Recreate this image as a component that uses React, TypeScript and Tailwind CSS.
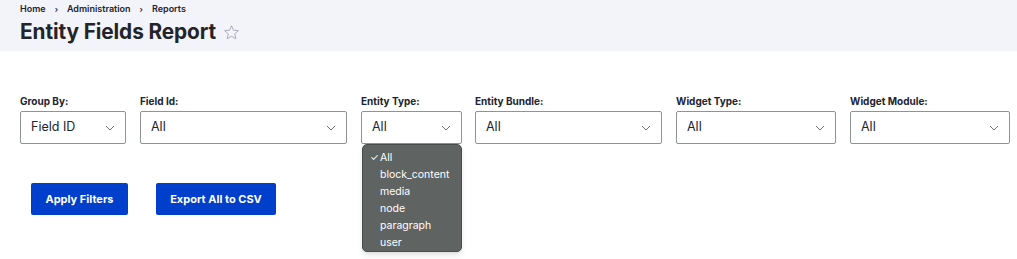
import React from 'react';

const font = { fontFamily: 'Inter, "Liberation Sans", Arial, sans-serif' };

function Chevron() {
  return (
    <svg width="10" height="6" viewBox="0 0 10 6" fill="none" className="shrink-0">
      <path d="M1 1l4 4 4-4" stroke="#6b6e76" strokeWidth="1" />
    </svg>
  );
}

function Star() {
  return (
    <svg width="17" height="17" viewBox="0 0 24 24" fill="none" className="ml-[7px] mt-[2px]">
      <path
        d="M12 2.5l2.8 6.3 6.9.6-5.2 4.6 1.6 6.8L12 17.3l-6.1 3.5 1.6-6.8-5.2-4.6 6.9-.6z"
        stroke="#8e929c"
        strokeWidth="1"
        strokeLinejoin="round"
      />
    </svg>
  );
}

interface FilterProps {
  label: string;
  value: string;
  width: string;
  children?: React.ReactNode;
}

function Filter({ label, value, width, children }: FilterProps) {
  return (
    <div className={`relative flex flex-col ${width}`}>
      <label className="text-[10px] font-bold text-[#222330] leading-[12px] mb-[4px]">{label}</label>
      <div className="h-[33px] border border-[#8e929c] rounded-[2px] bg-white flex items-center justify-between pl-[10px] pr-[10px]">
        <span className="text-[12.5px] text-[#222330]">{value}</span>
        <Chevron />
      </div>
      {children}
    </div>
  );
}

export default function App() {
  const options = ['block_content', 'media', 'node', 'paragraph', 'user'];
  return (
    <div className="w-[1017px] h-[259px] bg-white overflow-hidden" style={font}>
      {/* Header */}
      <div className="h-[51px] bg-[#f3f4f9] px-[20px] pt-[3px]">
        <div className="flex items-center gap-[9px] text-[9px] font-semibold text-[#222330] leading-[12px]">
          <span>Home</span>
          <span className="text-[8px]">›</span>
          <span>Administration</span>
          <span className="text-[8px]">›</span>
          <span>Reports</span>
        </div>
        <div className="flex items-center mt-[3px]">
          <h1 className="text-[20.8px] font-bold text-[#232429] leading-[27px] tracking-[-0.1px]">Entity Fields Report</h1>
          <Star />
        </div>
      </div>

      {/* Filters */}
      <div className="flex gap-[14px] pl-[20px] mt-[44px]">
        <Filter label="Group By:" value="Field ID" width="w-[106px]" />
        <Filter label="Field Id:" value="All" width="w-[207px]" />
        <Filter label="Entity Type:" value="All" width="w-[101px]">
          <div className="absolute top-[49px] left-[1px] w-[100px] h-[108px] bg-[#5f6362] rounded-[5px] border border-[#4a4d4c] shadow-md pt-[4px] z-10">
            <div className="flex items-center h-[17px] pl-[7px] text-[10.5px] text-white">
              <span className="w-[10px] text-[10px]">✓</span>
              <span>All</span>
            </div>
            {options.map((o) => (
              <div key={o} className="flex items-center h-[17px] pl-[17px] text-[10.5px] text-white">
                {o}
              </div>
            ))}
          </div>
        </Filter>
        <div className="ml-[-1px]">
          <Filter label="Entity Bundle:" value="All" width="w-[187px]" />
        </div>
        <Filter label="Widget Type:" value="All" width="w-[160px]" />
        <Filter label="Widget Module:" value="All" width="w-[160px]" />
      </div>

      {/* Buttons */}
      <div className="flex gap-[28px] pl-[31px] mt-[39px]">
        <button className="h-[32px] w-[97px] bg-[#003ecc] rounded-[2px] text-white text-[11px] font-bold">Apply Filters</button>
        <button className="h-[32px] w-[120px] bg-[#003ecc] rounded-[2px] text-white text-[11px] font-bold">Export All to CSV</button>
      </div>
    </div>
  );
}
